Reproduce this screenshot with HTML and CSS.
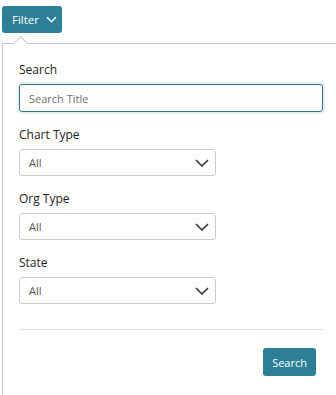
FILE: index.html
```html
<!DOCTYPE html>
<html lang="en">
<head>
    <meta charset="UTF-8">
    <meta name="viewport" content="width=device-width, initial-scale=1.0">
    <title>Filter</title>
    <link rel="stylesheet" href="styles.css">
</head>
<body>
    <div class="filter">
        <button class="filter-btn">
            Filter
            <svg viewBox="0 0 12 8"><path d="M1 1.5l5 5 5-5"/></svg>
        </button>

        <div class="panel">
            <div class="group">
                <label class="label">Search</label>
                <input class="input" type="text" placeholder="Search Title">
            </div>

            <div class="group">
                <label class="label">Chart Type</label>
                <div class="select">
                    <span>All</span>
                    <svg viewBox="0 0 14 8"><path d="M1 1l6 6 6-6"/></svg>
                </div>
            </div>

            <div class="group">
                <label class="label">Org Type</label>
                <div class="select">
                    <span>All</span>
                    <svg viewBox="0 0 14 8"><path d="M1 1l6 6 6-6"/></svg>
                </div>
            </div>

            <div class="group">
                <label class="label">State</label>
                <div class="select">
                    <span>All</span>
                    <svg viewBox="0 0 14 8"><path d="M1 1l6 6 6-6"/></svg>
                </div>
            </div>

            <div class="divider"></div>

            <div class="actions">
                <button class="btn">Search</button>
            </div>
        </div>
    </div>
</body>
</html>
```

FILE: styles.css
```css
* {
    margin: 0;
    padding: 0;
    box-sizing: border-box;
}

body {
    font-family: 'Open Sans', 'Noto Sans', sans-serif;
    background: white;
    color: #222;
    overflow: hidden;
}

.filter {
    padding: 6px 0 0 2px;
}

.filter-btn {
    display: flex;
    align-items: center;
    gap: 7px;
    height: 27px;
    width: 60px;
    padding: 0 0 0 10px;
    border: none;
    border-radius: 3px;
    background: #2c7f96;
    color: white;
    font-family: inherit;
    font-size: 11.5px;
}

.filter-btn svg {
    flex-shrink: 0;
    width: 11px;
    height: 7px;
    fill: none;
    stroke: white;
    stroke-width: 1.8;
}

.panel {
    position: relative;
    width: 337px;
    height: 360px;
    margin-top: 10px;
    padding: 17px 16px 0 16px;
    border-top: 1px solid #c8c8c8;
    border-left: 1px solid #c8c8c8;
}

/* notch pointing to the button */
.panel::before {
    content: '';
    position: absolute;
    top: -6px;
    left: 12px;
    width: 10px;
    height: 10px;
    background: white;
    border-top: 1px solid #c8c8c8;
    border-left: 1px solid #c8c8c8;
    transform: rotate(45deg);
}

.group {
    margin-bottom: 14px;
}

.label {
    display: block;
    font-size: 12px;
    line-height: 18px;
    margin-bottom: 5px;
    color: #222;
}

.input {
    display: block;
    width: 100%;
    height: 28px;
    padding: 0 9px;
    border: 1px solid #2e7a8c;
    border-radius: 3px;
    box-shadow: 0 0 0 2px rgba(46, 122, 140, 0.12);
    font-family: inherit;
    font-size: 11px;
    color: #333;
    outline: none;
}

.input::placeholder {
    color: #707070;
}

.select {
    display: flex;
    align-items: center;
    justify-content: space-between;
    width: 197px;
    height: 27px;
    padding: 0 6px 0 9px;
    border: 1px solid #ccc;
    border-radius: 3px;
    font-size: 11px;
    color: #555;
}

.select svg {
    width: 14px;
    height: 8px;
    fill: none;
    stroke: #333;
    stroke-width: 1.6;
}

.divider {
    height: 1px;
    background: #dedce6;
    margin: 25px 0 18px;
}

.actions {
    display: flex;
    justify-content: flex-end;
    padding-right: 7px;
}

.btn {
    height: 28px;
    padding: 0 9px;
    border: none;
    border-radius: 3px;
    background: #2c7f96;
    color: white;
    font-family: inherit;
    font-size: 11px;
}
```
